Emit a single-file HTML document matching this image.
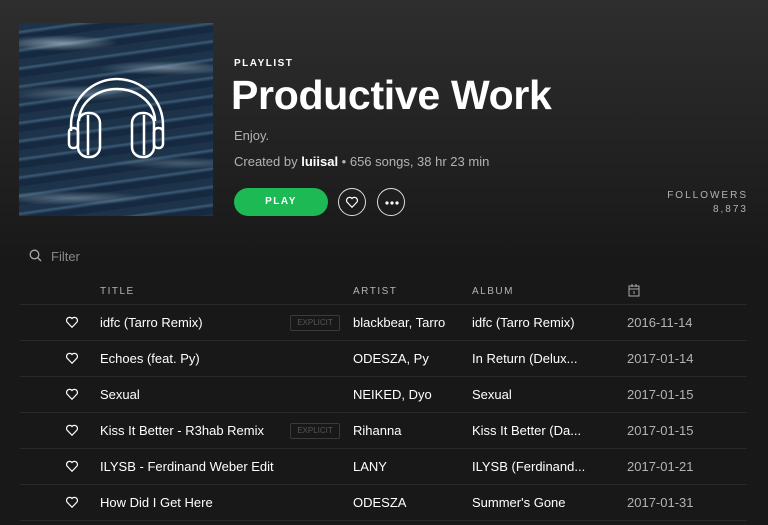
<!DOCTYPE html>
<html><head><style>
*{margin:0;padding:0;box-sizing:border-box}
body{width:768px;height:525px;overflow:hidden;background:linear-gradient(#2e2e2e 0,#1c1c1c 220px,#181818 260px);font-family:"Liberation Sans",sans-serif;color:#fff;position:relative}
.a{position:absolute}
.cover{left:19px;top:23px;width:194px;height:193px;overflow:hidden;background:
radial-gradient(ellipse 60px 8px at 40px 20px,rgba(190,205,215,.6),transparent),
radial-gradient(ellipse 70px 7px at 150px 45px,rgba(190,205,215,.5),transparent),
radial-gradient(ellipse 80px 8px at 60px 70px,rgba(160,180,195,.4),transparent),
radial-gradient(ellipse 70px 6px at 160px 140px,rgba(160,180,195,.35),transparent),
radial-gradient(ellipse 80px 7px at 50px 175px,rgba(170,190,205,.45),transparent),
repeating-linear-gradient(172deg,#1c334a 0 7px,#3b5a76 9px,#152a40 12px 18px),#1a3047;}
.t{font-size:13px;color:#fff;white-space:nowrap}
.g{color:#b3b3b3}
.hdr{font-size:10px;letter-spacing:1.5px;color:#b3b3b3}
.line{left:20px;width:727px;height:1px;background:#282828}
.exp{left:290px;width:50px;height:16px;border:1px solid #3a3a3a;border-radius:2px;font-size:8px;color:#555;text-align:center;line-height:14px}
</style></head><body>
<div class="a cover">
<svg width="194" height="193" viewBox="0 0 194 193"><g fill="none" stroke="#fff" stroke-width="2.5"><path d="M52 108 V102 a46 46 0 0 1 92 0 V108"/><path d="M60 98 a38 32 0 0 1 76 0"/><rect x="59" y="90" width="22" height="44" rx="10"/><rect x="113" y="90" width="22" height="44" rx="10"/><rect x="50" y="105" width="9" height="20" rx="4"/><rect x="135" y="105" width="9" height="20" rx="4"/><path d="M69 92 V132 M125 92 V132"/></g></svg>
</div>
<div class="a hdr" style="left:234px;top:58px;color:#fff;font-weight:bold">PLAYLIST</div>
<div class="a" style="left:231px;top:72px;font-size:41px;font-weight:bold;letter-spacing:-0.3px">Productive Work</div>
<div class="a t g" style="left:234px;top:128px">Enjoy.</div>
<div class="a t g" style="left:234px;top:154px">Created by <b style="color:#fff">luiisal</b> • 656 songs, 38 hr 23 min</div>
<div class="a" style="left:234px;top:188px;width:94px;height:28px;border-radius:14px;background:#1db954;font-size:10px;font-weight:bold;letter-spacing:1.5px;text-align:center;line-height:28px">PLAY</div>
<div class="a" style="left:338px;top:188px;width:28px;height:28px;border-radius:50%;border:1px solid #ddd"><svg class="a" style="left:6px;top:6px" width="14" height="14" viewBox="0 0 16 16"><path d="M8 14 L2.5 8.3 A3.2 3.2 0 0 1 8 4 A3.2 3.2 0 0 1 13.5 8.3 Z" fill="none" stroke="#fff" stroke-width="1.4"/></svg></div>
<div class="a" style="left:377px;top:188px;width:28px;height:28px;border-radius:50%;border:1px solid #ddd"><svg class="a" style="left:6px;top:12px" width="16" height="4"><circle cx="3" cy="2" r="1.6" fill="#fff"/><circle cx="8" cy="2" r="1.6" fill="#fff"/><circle cx="13" cy="2" r="1.6" fill="#fff"/></svg></div>
<div class="a hdr" style="right:20px;top:189px;text-align:right;letter-spacing:2px;line-height:14px">FOLLOWERS<br>8,873</div>
<svg class="a" style="left:29px;top:249px" width="13" height="13" viewBox="0 0 13 13"><circle cx="5.5" cy="5.5" r="4.3" fill="none" stroke="#aaa" stroke-width="1.3"/><path d="M8.5 8.5 L12 12" stroke="#aaa" stroke-width="1.3"/></svg>
<div class="a t" style="left:51px;top:249px;color:#888">Filter</div>
<div class="a hdr" style="left:100px;top:286px">TITLE</div>
<div class="a hdr" style="left:353px;top:286px">ARTIST</div>
<div class="a hdr" style="left:472px;top:286px">ALBUM</div>
<svg class="a" style="left:628px;top:284px" width="12" height="13" viewBox="0 0 12 13"><rect x="1" y="2" width="10" height="10" fill="none" stroke="#aaa"/><path d="M1 5h10M4 0v3M8 0v3M6 7v3" stroke="#aaa"/></svg>
<div class="a line" style="top:304px"></div>
<div id="rows"></div>
<script>
var r=[["idfc (Tarro Remix)",1,"blackbear, Tarro","idfc (Tarro Remix)","2016-11-14"],["Echoes (feat. Py)",0,"ODESZA, Py","In Return (Delux...","2017-01-14"],["Sexual",0,"NEIKED, Dyo","Sexual","2017-01-15"],["Kiss It Better - R3hab Remix",1,"Rihanna","Kiss It Better (Da...","2017-01-15"],["ILYSB - Ferdinand Weber Edit",0,"LANY","ILYSB (Ferdinand...","2017-01-21"],["How Did I Get Here",0,"ODESZA","Summer's Gone","2017-01-31"]];
var h="";r.forEach(function(x,i){var y=315+i*36;
h+='<svg class="a" style="left:65px;top:'+(y)+'px" width="14" height="14" viewBox="0 0 16 16"><path d="M8 14 L2.5 8.3 A3.2 3.2 0 0 1 8 4 A3.2 3.2 0 0 1 13.5 8.3 Z" fill="none" stroke="#fff" stroke-width="1.4"/></svg>';
h+='<div class="a t" style="left:100px;top:'+y+'px">'+x[0]+'</div>';
if(x[1])h+='<div class="a exp" style="top:'+y+'px">EXPLICIT</div>';
h+='<div class="a t" style="left:353px;top:'+y+'px">'+x[2]+'</div><div class="a t" style="left:472px;top:'+y+'px">'+x[3]+'</div><div class="a t g" style="left:627px;top:'+y+'px">'+x[4]+'</div><div class="a line" style="top:'+(y+25)+'px"></div>';});
document.getElementById("rows").innerHTML=h;
</script>
</body></html>
